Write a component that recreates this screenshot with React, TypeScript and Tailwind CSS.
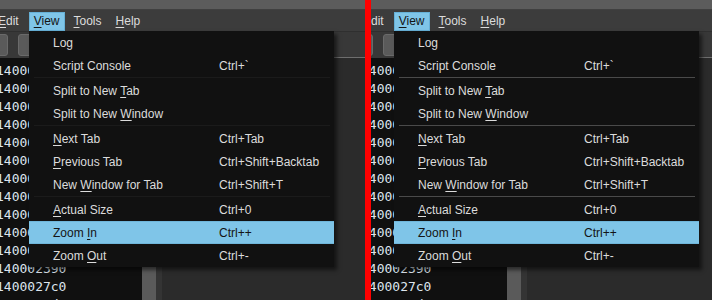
import type { ReactNode } from 'react';

type MenuEntry =
  | { sep: true }
  | { sep?: false; label: string; u?: number; shortcut?: string; active?: boolean };

const menuItems: MenuEntry[] = [
  { label: 'Log' },
  { label: 'Script Console', shortcut: 'Ctrl+`' },
  { sep: true },
  { label: 'Split to New Tab', u: 13 },
  { label: 'Split to New Window', u: 13 },
  { sep: true },
  { label: 'Next Tab', u: 0, shortcut: 'Ctrl+Tab' },
  { label: 'Previous Tab', u: 0, shortcut: 'Ctrl+Shift+Backtab' },
  { label: 'New Window for Tab', u: 4, shortcut: 'Ctrl+Shift+T' },
  { sep: true },
  { label: 'Actual Size', u: 0, shortcut: 'Ctrl+0' },
  { label: 'Zoom In', u: 5, shortcut: 'Ctrl++', active: true },
  { label: 'Zoom Out', u: 5, shortcut: 'Ctrl+-' },
];

const addresses = [
  '140001a40', '140001c10', '140001e50', '140001f20', '140002010', '140002080', '140002100',
  '140002190', '140002210', '1400022a0', '140002320', '140002390', '1400027c0', '1400028d0',
];

// label with one underlined mnemonic letter
const Mnemonic = ({ text, u }: { text: string; u?: number }) => {
  if (u === undefined) return <>{text}</>;
  return (
    <>
      {text.slice(0, u)}
      <span className="underline underline-offset-2">{text[u]}</span>
      {text.slice(u + 1)}
    </>
  );
};

const ViewMenu = ({ sepClass }: { sepClass: string }) => (
  <div className="absolute left-[29px] top-[31px] w-[305px] bg-[#111111] shadow-[3px_3px_4px_rgba(0,0,0,0.55)] text-[12px] text-[#dcdcdc]">
    {menuItems.map((item, i) => {
      if (item.sep) {
        return (
          <div key={i} className="h-[2px] px-[5px] pr-[4px]">
            <div className={`h-px ${sepClass}`} />
          </div>
        );
      }
      return (
        <div
          key={i}
          className={`flex h-[23px] items-center pl-[24px] ${
            item.active ? 'bg-[#7fc5e8] text-[#141414] border-y border-[#6fb6da]' : ''
          }`}
        >
          <span className="w-[166px] whitespace-nowrap">
            <Mnemonic text={item.label} u={item.u} />
          </span>
          <span className="whitespace-nowrap">{item.shortcut}</span>
        </div>
      );
    })}
  </div>
);

const Panel = ({ sepClass }: { sepClass: string }) => (
  <div className="relative w-[712px] h-[300px]">
    <div className="h-[10px] bg-[#5c5c5c] border-b border-[#404040]" />
    <div className="flex h-[21px] bg-[#3c3c3c] pt-[2px] text-[12px] leading-[19px] text-[#dcdcdc]">
      <span className="ml-[-2px]">
        <Mnemonic text="Edit" u={0} />
      </span>
      <span className="ml-[10px] h-[19px] px-[4px] bg-[#7fc5e8] border border-[#66b0d6] text-[#141414] leading-[17px]">
        <Mnemonic text="View" u={0} />
      </span>
      <span className="ml-[9px]">
        <Mnemonic text="Tools" u={0} />
      </span>
      <span className="ml-[14px]">
        <Mnemonic text="Help" u={0} />
      </span>
    </div>
    <div className="flex h-[27px] bg-[#383838] border-t border-[#2f2f2f]">
      <div className="flex w-[162px] gap-[10px] pt-[2px] ml-[-10px]">
        <div className="h-[22px] w-[18px] rounded-[3px] bg-[#5a5a5a] border border-[#6a6a6a]" />
        <div className="h-[22px] w-[24px] rounded-[3px] bg-[#5a5a5a] border border-[#6a6a6a]" />
      </div>
      <div className="flex-1 border-b border-[#6e6e6e]" />
    </div>
    <div className="flex h-[242px]">
      <div className="w-[142px] bg-[#101010] pt-[4px] overflow-hidden">
        {addresses.map((a) => (
          <div
            key={a}
            className="ml-[-4px] h-[18px] leading-[18px] text-[13px] text-[#dde5ee] font-['DejaVu_Sans_Mono',monospace]"
          >
            {a}
          </div>
        ))}
      </div>
      <div className="w-[20px] bg-[#343434] pt-[90px]">
        <div className="h-[160px] w-[14px] bg-[#5a5a5a]" />
      </div>
      <div className="flex-1 bg-[#2b2b2b]" />
    </div>
    <ViewMenu sepClass={sepClass} />
  </div>
);

const Clip = ({ width, children }: { width: string; children: ReactNode }) => (
  <div className={`${width} h-[300px] overflow-hidden shrink-0`}>{children}</div>
);

export default function App() {
  return (
    <div className="flex w-[712px] h-[300px] overflow-hidden bg-[#2b2b2b] font-['Liberation_Sans',Arial,sans-serif]">
      <Clip width="w-[365px]">
        <Panel sepClass="bg-[#1b1b1b]" />
      </Clip>
      <div className="w-[6px] h-[300px] bg-[#ff0000] shrink-0" />
      <Clip width="w-[341px]">
        <div className="ml-[-6px]">
          <Panel sepClass="bg-[#4a4a4a]" />
        </div>
      </Clip>
    </div>
  );
}
